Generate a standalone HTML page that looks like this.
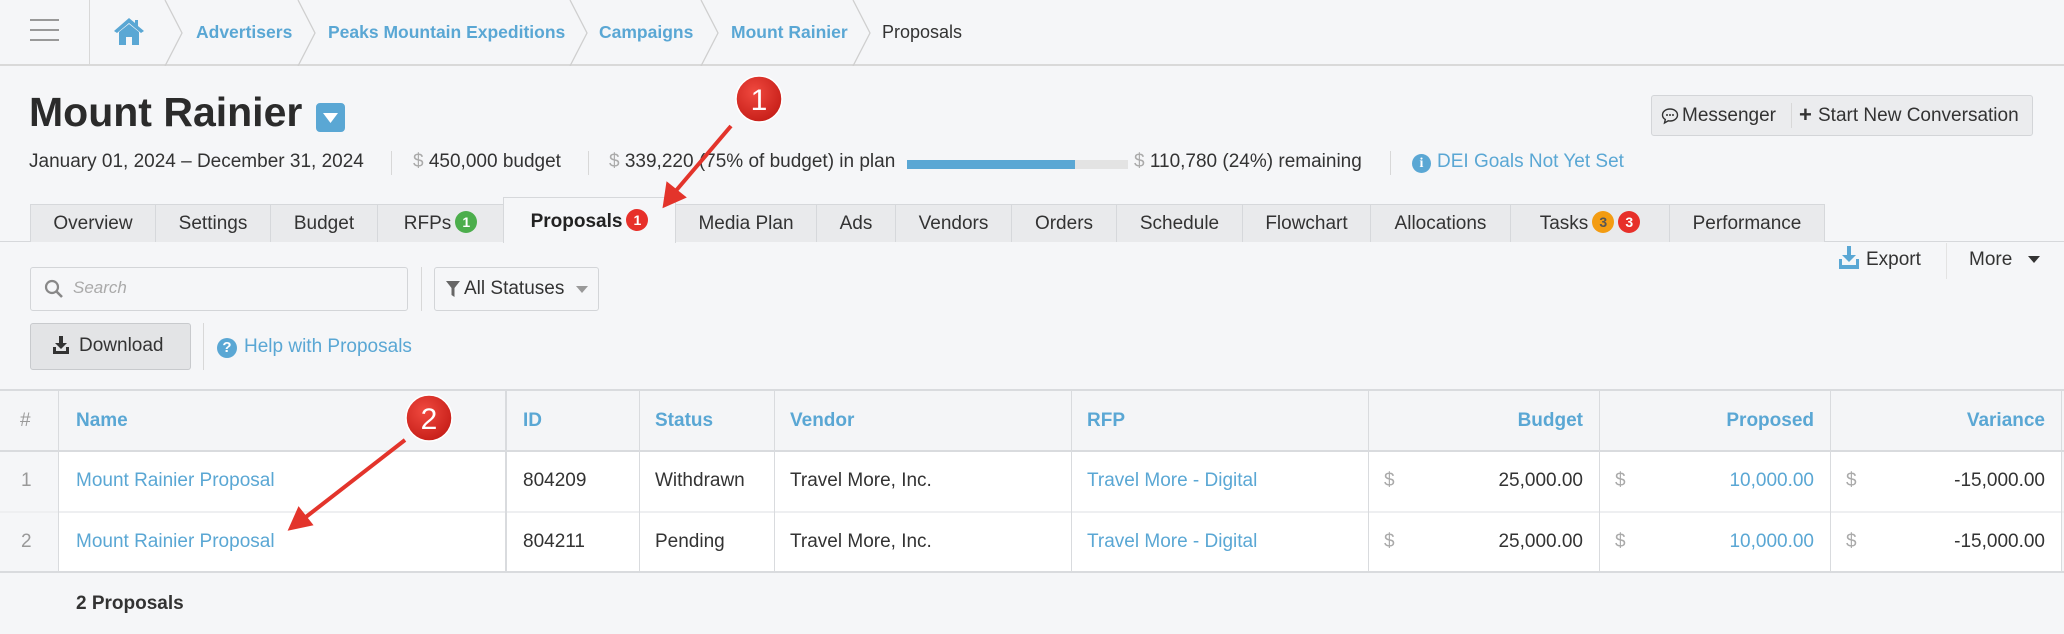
<!DOCTYPE html>
<html><head><meta charset="utf-8"><style>
*{box-sizing:border-box;margin:0;padding:0}
body{width:2064px;height:634px;background:#f5f6f8;font-family:"Liberation Sans",Arial,sans-serif;color:#333;position:relative;overflow:hidden;font-size:19px}
.a{position:absolute;white-space:nowrap}
.blue{color:#5aa7d4}
.bc{font-weight:bold;font-size:17.5px;color:#5aa7d4;top:22px}
.tab{position:absolute;top:204px;height:38px;border:1px solid #d6d8db;border-bottom:none;background:#e9eaec;font-size:19px;text-align:center;line-height:38px;color:#333}
.badge{display:inline-block;width:22px;height:22px;border-radius:50%;color:#fff;font-size:14px;font-weight:bold;line-height:22px;text-align:center;vertical-align:2px;margin-left:4px}
.sep{position:absolute;width:1px;background:#d8d8d8}
.vl{position:absolute;top:390px;height:182px;width:1px;background:#d9dbde}
.hl{position:absolute;left:0;width:2064px;height:2px;background:#d9dbde}
.cell{position:absolute;font-size:19px}
.dol{color:#aaa}
.meta{font-size:19px;top:151px}
</style></head><body>
<div class="a" style="left:0;top:0;width:2064px;height:66px;border-bottom:2px solid #d9d9d9;background:#f5f6f8"></div>
<div class="a" style="left:30px;top:19px;width:29px;height:2px;background:#999"></div>
<div class="a" style="left:30px;top:29px;width:29px;height:2px;background:#999"></div>
<div class="a" style="left:30px;top:39px;width:29px;height:2px;background:#999"></div>
<div class="sep" style="left:89px;top:0;height:65px"></div>
<svg class="a" style="left:112px;top:16px" width="34" height="30" viewBox="0 0 34 30"><path d="M17 2 L2 15 L5 17 L17 7 L29 17 L32 15 L26 10 L26 4 L23 4 L23 7 Z" fill="#5aa7d4"/><path d="M7 16 L17 8 L27 16 L27 29 L20 29 L20 21 L14 21 L14 29 L7 29 Z" fill="#5aa7d4"/></svg>
<svg class="a" style="left:0;top:0" width="2064" height="66"><g fill="none" stroke="#cfcfcf" stroke-width="1.3">
<path d="M165 0 L182 33 L165 66"/><path d="M298 0 L315 33 L298 66"/><path d="M570 0 L587 33 L570 66"/><path d="M701 0 L718 33 L701 66"/><path d="M853 0 L870 33 L853 66"/></g></svg>
<div class="a bc" style="left:196px">Advertisers</div>
<div class="a bc" style="left:328px">Peaks Mountain Expeditions</div>
<div class="a bc" style="left:599px">Campaigns</div>
<div class="a bc" style="left:731px">Mount Rainier</div>
<div class="a" style="left:882px;top:22px;font-size:18px;color:#333">Proposals</div>

<div class="a" style="left:29px;top:89px;font-size:41px;font-weight:bold;color:#2b2b2b">Mount Rainier</div>
<div class="a" style="left:316px;top:103px;width:29px;height:29px;border:3px solid #5aa7d4;border-radius:4px;background:#fff"></div>
<div class="a" style="left:319px;top:106px;width:23px;height:23px;background:#5aa7d4"></div>
<svg class="a" style="left:322px;top:112px" width="17" height="12"><path d="M1 1 L16 1 L8.5 11 Z" fill="#fff"/></svg>

<div class="a meta" style="left:29px">January 01, 2024 – December 31, 2024</div>
<div class="sep" style="left:391px;top:151px;height:24px"></div>
<div class="a meta" style="left:413px"><span class="dol">$</span> 450,000 budget</div>
<div class="sep" style="left:588px;top:151px;height:24px"></div>
<div class="a meta" style="left:609px"><span class="dol">$</span> 339,220 (75% of budget) in plan</div>
<div class="a" style="left:907px;top:160px;width:221px;height:9px;background:#e3e3e3"></div>
<div class="a" style="left:907px;top:160px;width:168px;height:9px;background:#5aa7d4"></div>
<div class="a meta" style="left:1134px"><span class="dol">$</span> 110,780 (24%) remaining</div>
<div class="sep" style="left:1390px;top:151px;height:24px"></div>
<div class="a" style="left:1412px;top:154px;width:19px;height:19px;border-radius:50%;background:#5aa7d4;color:#fff;font-size:14px;font-weight:bold;text-align:center;line-height:19px;font-family:'Liberation Serif',serif">i</div>
<div class="a blue meta" style="left:1437px">DEI Goals Not Yet Set</div>

<div class="a" style="left:1651px;top:95px;width:382px;height:41px;border:1px solid #d3d5d8;border-radius:3px;background:#ebecee"></div>
<svg class="a" style="left:1661px;top:107px" width="18" height="18" viewBox="0 0 18 18"><path d="M9 2 C4.5 2 1.5 4.8 1.5 8 C1.5 10 2.6 11.5 4.3 12.5 L3.5 16 L7.3 13.8 C7.8 13.9 8.4 14 9 14 C13.5 14 16.5 11.2 16.5 8 C16.5 4.8 13.5 2 9 2 Z" fill="none" stroke="#333" stroke-width="1.4"/><circle cx="6" cy="8" r="1" fill="#333"/><circle cx="9" cy="8" r="1" fill="#333"/><circle cx="12" cy="8" r="1" fill="#333"/></svg>
<div class="a" style="left:1682px;top:105px;font-size:19px">Messenger</div>
<div class="sep" style="left:1791px;top:103px;height:25px"></div>
<div class="a" style="left:1799px;top:102px;font-size:22px;font-weight:bold">+</div>
<div class="a" style="left:1818px;top:105px;font-size:19px">Start New Conversation</div>

<div class="a" style="left:0;top:241px;width:2064px;height:1px;background:#d6d8db"></div>
<div class="tab" style="left:30px;width:126px">Overview</div>
<div class="tab" style="left:155px;width:116px">Settings</div>
<div class="tab" style="left:270px;width:108px">Budget</div>
<div class="tab" style="left:377px;width:127px">RFPs<span class="badge" style="background:#4cae4c">1</span></div>
<div class="tab" style="left:503px;top:197px;height:46px;width:173px;background:#f5f6f8;font-weight:bold;line-height:48px;color:#222">Proposals<span class="badge" style="background:#e7302a">1</span></div>
<div class="tab" style="left:675px;width:142px">Media Plan</div>
<div class="tab" style="left:816px;width:80px">Ads</div>
<div class="tab" style="left:895px;width:117px">Vendors</div>
<div class="tab" style="left:1011px;width:106px">Orders</div>
<div class="tab" style="left:1116px;width:127px">Schedule</div>
<div class="tab" style="left:1242px;width:129px">Flowchart</div>
<div class="tab" style="left:1370px;width:141px">Allocations</div>
<div class="tab" style="left:1510px;width:160px">Tasks<span class="badge" style="background:#f39c12;color:#555">3</span><span class="badge" style="background:#e7302a">3</span></div>
<div class="tab" style="left:1669px;width:156px">Performance</div>

<div class="a" style="left:30px;top:267px;width:378px;height:44px;border:1px solid #d3d5d8;border-radius:3px;background:#f5f6f8"></div>
<svg class="a" style="left:44px;top:279px" width="20" height="20"><circle cx="8" cy="8" r="6" fill="none" stroke="#888" stroke-width="2.2"/><path d="M12.5 12.5 L18 18" stroke="#888" stroke-width="2.6"/></svg>
<div class="a" style="left:73px;top:278px;font-size:17px;font-style:italic;color:#aaa">Search</div>
<div class="sep" style="left:421px;top:267px;height:44px"></div>
<div class="a" style="left:434px;top:267px;width:165px;height:44px;border:1px solid #d3d5d8;border-radius:3px"></div>
<svg class="a" style="left:446px;top:281px" width="14" height="17"><path d="M0 0 L14 0 L8.5 7 L8.5 16 L5.5 14 L5.5 7 Z" fill="#666"/></svg>
<div class="a" style="left:464px;top:278px;font-size:19px">All Statuses</div>
<svg class="a" style="left:576px;top:286px" width="12" height="8"><path d="M0 0 L12 0 L6 7 Z" fill="#999"/></svg>

<div class="a" style="left:30px;top:323px;width:161px;height:47px;border:1px solid #c8cacd;border-radius:3px;background:#e3e4e6"></div>
<svg class="a" style="left:52px;top:336px" width="18" height="19"><rect x="7" y="0" width="4" height="8" fill="#333"/><path d="M3 7 L15 7 L9 13 Z" fill="#333"/><path d="M1 11 L1 18 L17 18 L17 11 L14 11 L14 15 L4 15 L4 11 Z" fill="#333"/></svg>
<div class="a" style="left:79px;top:335px;font-size:19px">Download</div>
<div class="sep" style="left:203px;top:323px;height:47px"></div>
<div class="a" style="left:217px;top:338px;width:20px;height:20px;border-radius:50%;background:#5aa7d4;color:#fff;font-size:15px;font-weight:bold;text-align:center;line-height:20px">?</div>
<div class="a blue" style="left:244px;top:336px;font-size:19px">Help with Proposals</div>

<svg class="a" style="left:1838px;top:246px" width="22" height="24"><rect x="9" y="0" width="4" height="10" fill="#5aa7d4"/><path d="M4 9 L18 9 L11 16 Z" fill="#5aa7d4"/><path d="M1 13 L1 23 L21 23 L21 13 L18 13 L18 19 L4 19 L4 13 Z" fill="#5aa7d4"/></svg>
<div class="a" style="left:1866px;top:249px;font-size:19px">Export</div>
<div class="sep" style="left:1946px;top:243px;height:36px;background:#e3e3e3"></div>
<div class="a" style="left:1969px;top:249px;font-size:19px">More</div>
<svg class="a" style="left:2028px;top:256px" width="12" height="8"><path d="M0 0 L12 0 L6 7 Z" fill="#333"/></svg>

<div class="a" style="left:0;top:390px;width:2064px;height:61px;background:#f4f5f7"></div>
<div class="a" style="left:59px;top:451px;width:2003px;height:121px;background:#fff"></div>
<div class="hl" style="top:389px"></div>
<div class="hl" style="top:450px"></div>
<div class="hl" style="top:511px;background:#eeeff1"></div>
<div class="hl" style="top:571px"></div>
<div class="vl" style="left:58px"></div>
<div class="vl" style="left:505px;width:2px"></div>
<div class="vl" style="left:639px"></div>
<div class="vl" style="left:774px"></div>
<div class="vl" style="left:1071px"></div>
<div class="vl" style="left:1368px"></div>
<div class="vl" style="left:1599px"></div>
<div class="vl" style="left:1830px"></div>
<div class="vl" style="left:2061px"></div>

<div class="cell" style="left:20px;top:410px;color:#999">#</div>
<div class="cell blue" style="left:76px;top:410px;font-weight:bold">Name</div>
<div class="cell blue" style="left:523px;top:410px;font-weight:bold">ID</div>
<div class="cell blue" style="left:655px;top:410px;font-weight:bold">Status</div>
<div class="cell blue" style="left:790px;top:410px;font-weight:bold">Vendor</div>
<div class="cell blue" style="left:1087px;top:410px;font-weight:bold">RFP</div>
<div class="cell blue" style="right:481px;top:410px;font-weight:bold">Budget</div>
<div class="cell blue" style="right:250px;top:410px;font-weight:bold">Proposed</div>
<div class="cell blue" style="right:19px;top:410px;font-weight:bold">Variance</div>

<div class="cell" style="left:21px;top:470px;color:#999">1</div>
<div class="cell blue" style="left:76px;top:470px">Mount Rainier Proposal</div>
<div class="cell" style="left:523px;top:470px">804209</div>
<div class="cell" style="left:655px;top:470px">Withdrawn</div>
<div class="cell" style="left:790px;top:470px">Travel More, Inc.</div>
<div class="cell blue" style="left:1087px;top:470px">Travel More - Digital</div>
<div class="cell dol" style="left:1384px;top:470px">$</div>
<div class="cell" style="right:481px;top:470px">25,000.00</div>
<div class="cell dol" style="left:1615px;top:470px">$</div>
<div class="cell blue" style="right:250px;top:470px">10,000.00</div>
<div class="cell dol" style="left:1846px;top:470px">$</div>
<div class="cell" style="right:19px;top:470px">-15,000.00</div>

<div class="cell" style="left:21px;top:531px;color:#999">2</div>
<div class="cell blue" style="left:76px;top:531px">Mount Rainier Proposal</div>
<div class="cell" style="left:523px;top:531px">804211</div>
<div class="cell" style="left:655px;top:531px">Pending</div>
<div class="cell" style="left:790px;top:531px">Travel More, Inc.</div>
<div class="cell blue" style="left:1087px;top:531px">Travel More - Digital</div>
<div class="cell dol" style="left:1384px;top:531px">$</div>
<div class="cell" style="right:481px;top:531px">25,000.00</div>
<div class="cell dol" style="left:1615px;top:531px">$</div>
<div class="cell blue" style="right:250px;top:531px">10,000.00</div>
<div class="cell dol" style="left:1846px;top:531px">$</div>
<div class="cell" style="right:19px;top:531px">-15,000.00</div>

<div class="a" style="left:76px;top:593px;font-size:19px;font-weight:bold">2 Proposals</div>

<svg class="a" style="left:0;top:0" width="2064" height="634">
<defs><radialGradient id="g" cx="40%" cy="35%" r="65%"><stop offset="0" stop-color="#f0493f"/><stop offset="1" stop-color="#c8201a"/></radialGradient></defs>
<g stroke="#e3342b" stroke-width="4" fill="#e3342b">
<line x1="731" y1="126" x2="674" y2="193"/>
<path d="M665 205 L668 185 L683 197 Z"/>
<line x1="405" y1="440" x2="302" y2="520"/>
<path d="M291 528 L299 510 L310 524 Z"/>
</g>
<circle cx="759" cy="99" r="23" fill="url(#g)" stroke="#fff" stroke-width="1.5"/>
<text x="759" y="110" font-family="Liberation Sans,Arial" font-size="30" fill="#fff" text-anchor="middle">1</text>
<circle cx="429" cy="418" r="23" fill="url(#g)" stroke="#fff" stroke-width="1.5"/>
<text x="429" y="429" font-family="Liberation Sans,Arial" font-size="30" fill="#fff" text-anchor="middle">2</text>
</svg>
</body></html>
